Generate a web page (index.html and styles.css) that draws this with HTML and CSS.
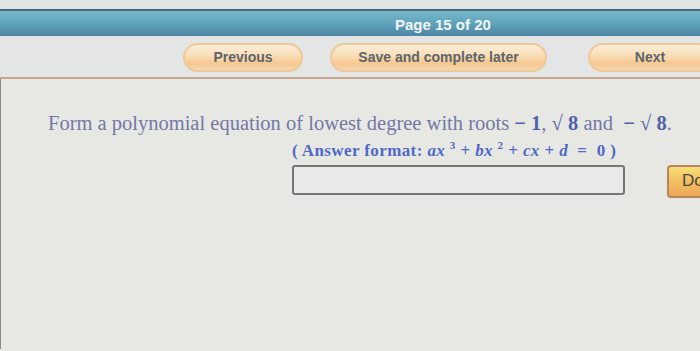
FILE: index.html
```html
<!DOCTYPE html>
<html lang="en">
<head>
  <meta charset="UTF-8">
  <meta name="viewport" content="width=device-width, initial-scale=1.0">
  <title>Page 15 of 20</title>
  <link rel="stylesheet" href="styles.css">
</head>
<body>
  <div class="top-strip"></div>
  <div class="page-bar">Page 15 of 20</div>
  <div class="nav-bar">
    <button class="nav-btn prev">Previous</button>
    <button class="nav-btn save">Save and complete later</button>
    <button class="nav-btn next">Next</button>
  </div>

  <div class="main">
    <p class="question">
      Form a polynomial equation of lowest degree with roots <b>&minus; 1</b>, <b>&radic; 8</b> and &nbsp;<b>&minus; &radic; 8</b>.
    </p>
    <div class="answer">
      <p class="format">( Answer format: <i>ax</i> <sup>3</sup> + <i>bx</i> <sup>2</sup> + <i>cx</i> + <i>d</i> &nbsp;= &nbsp;0 )</p>
      <div class="answer-row">
        <input type="text" class="answer-input">
        <button class="done-btn">Done</button>
      </div>
    </div>
  </div>
</body>
</html>
```

FILE: styles.css
```css
body {
  margin: 0;
  background-color: #e7e8e4;
  overflow: hidden;
  height: 351px;
}
.top-strip {
  height: 9px;
  background-color: #e2e4e2;
}
.page-bar {
  height: 25px;
  border-top: 2px solid #3f6c80;
  background: linear-gradient(to bottom, #78b8ca 0%, #62a6bd 45%, #5793b0 75%, #4f86a3 100%);
  color: #f2f6f8;
  font-family: 'Liberation Sans', Arial, sans-serif;
  font-weight: bold;
  font-size: 15px;
  line-height: 27px;
  padding-left: 395px;
}
.nav-bar {
  height: 40px;
  display: flex;
  align-items: center;
  padding-left: 183px;
  padding-top: 1px;
  border-bottom: 2px solid #c9a48c;
  background-color: #e3e6e4;
  white-space: nowrap;
}
.nav-btn {
  height: 29px;
  border: 2px solid #f0c898;
  border-radius: 15px;
  background: linear-gradient(to bottom, #fbeedb 0%, #f9dfb9 40%, #f5c78f 75%, #f7d8b1 100%);
  color: #5e646a;
  font-family: 'Liberation Sans', Arial, sans-serif;
  font-weight: bold;
  font-size: 14px;
  padding: 0;
  flex-shrink: 0;
}
.prev {
  width: 120px;
}
.save {
  width: 217px;
  margin-left: 27px;
}
.next {
  width: 124px;
  margin-left: 41px;
}
.main {
  border-left: 1px solid #8a8c88;
  height: 270px;
}
.question {
  margin: 0;
  padding: 32px 0 0 47px;
  font-family: 'Liberation Serif', 'Times New Roman', serif;
  font-size: 20.5px;
  color: #7478a6;
  white-space: nowrap;
  line-height: 24px;
}
.question b {
  color: #5262a8;
}
.answer {
  padding-left: 291px;
}
.format {
  margin: 0;
  padding-top: 1px;
  font-family: 'Liberation Serif', 'Times New Roman', serif;
  font-weight: bold;
  font-size: 17px;
  letter-spacing: 0.4px;
  line-height: 18px;
  color: #5068c8;
  white-space: nowrap;
}
.format sup {
  font-size: 11px;
}
.answer-row {
  display: flex;
  align-items: flex-start;
  margin-top: 5px;
  white-space: nowrap;
}
.answer-input {
  width: 329px;
  height: 26px;
  border: 2px solid #747674;
  border-radius: 3px;
  background-color: #e9eae7;
  padding: 0;
  margin: 0;
  flex-shrink: 0;
}
.done-btn {
  margin-left: 42px;
  width: 60px;
  height: 33px;
  border: 2px solid #b8865a;
  border-radius: 4px;
  background: linear-gradient(to bottom, #f7de78 0%, #f2c060 50%, #eba658 100%);
  color: #4a4640;
  font-family: 'Liberation Sans', Arial, sans-serif;
  font-size: 17px;
  text-align: left;
  padding: 0 0 0 13px;
  flex-shrink: 0;
}
```
